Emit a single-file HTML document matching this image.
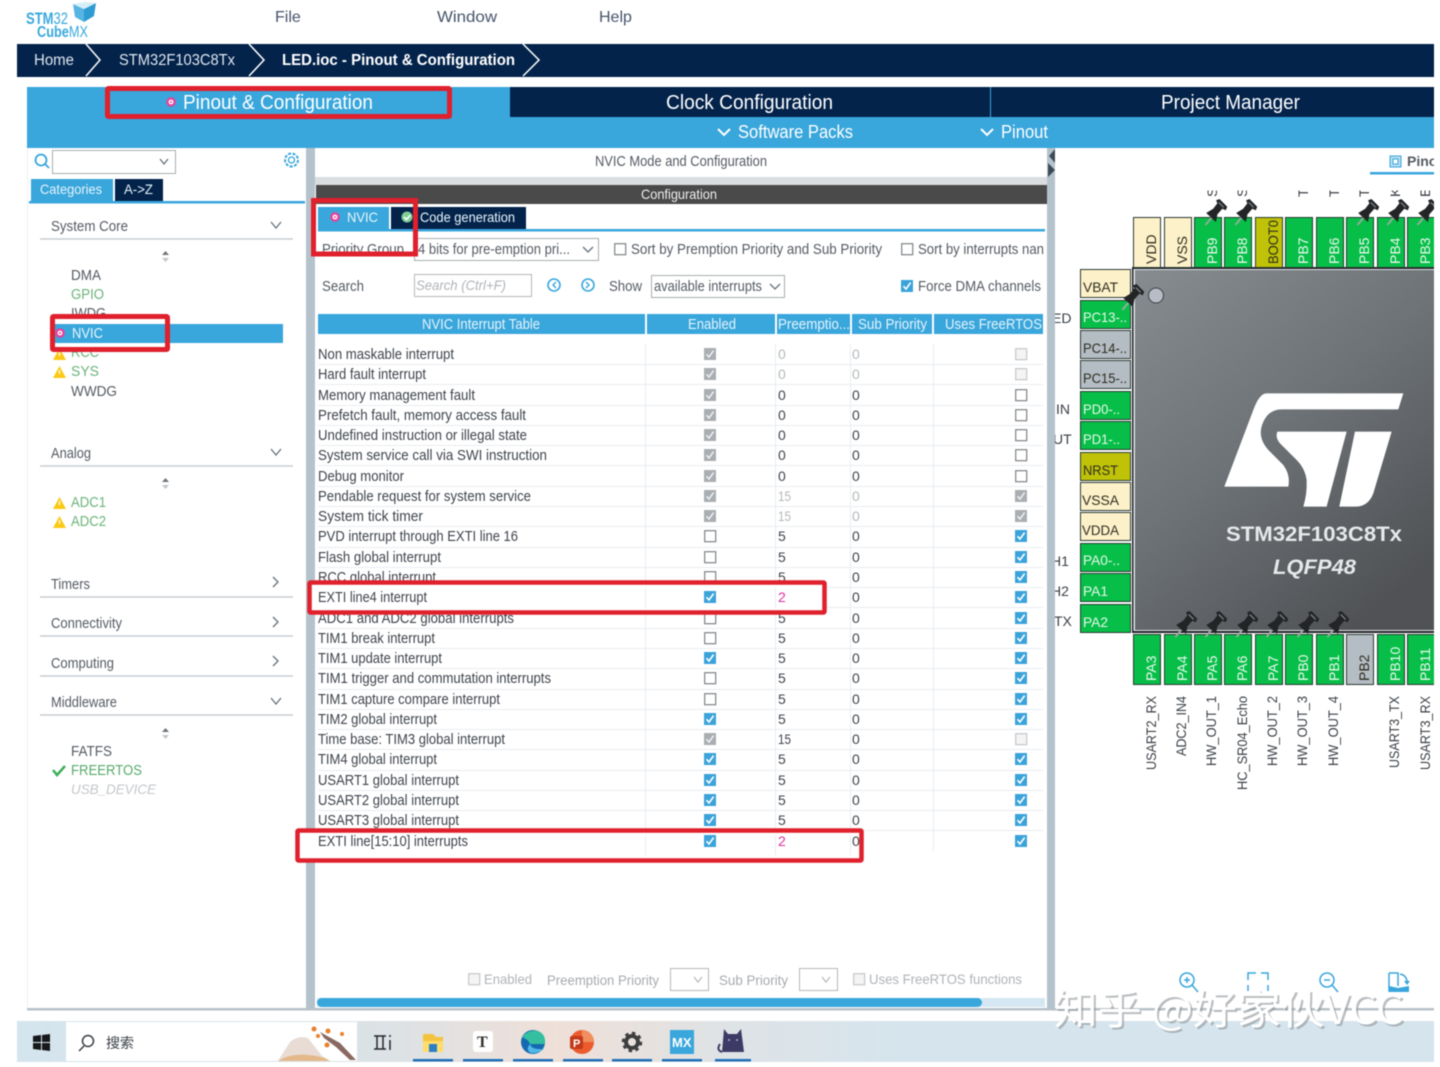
<!DOCTYPE html>
<html><head><meta charset="utf-8"><style>
html,body{margin:0;padding:0;background:#fff;width:1440px;height:1067px;overflow:hidden}
svg{display:block;filter:blur(.45px)}
text{font-family:"Liberation Sans","Noto Sans CJK SC",sans-serif}
.r{font-size:14.5px;fill:#3f444c}
.s{font-size:14.5px;fill:#555b63}
.n{font-size:14px;fill:#3f444c}
.dim{fill:#b4b8bb}
.w{fill:#fff}
.pw{font-size:14px;fill:#eaf7ee}
.pd{font-size:14px;fill:#2e2e20}
.lb{font-size:14px;fill:#3a3f45}
.ln{stroke:#c8ced2;stroke-width:1.5;fill:none}
.chev{fill:none;stroke:#66707a;stroke-width:1.3}
.rl{stroke:#e9ecee;stroke-width:1}
</style></head><body>
<svg width="1440" height="1067" viewBox="0 0 1440 1067" xmlns="http://www.w3.org/2000/svg">
<defs>
<linearGradient id="chip" x1="0" y1="0" x2="0.7" y2="1"><stop offset="0" stop-color="#868c90"/><stop offset="0.5" stop-color="#6e7377"/><stop offset="1" stop-color="#505255"/></linearGradient>
<linearGradient id="tb" x1="0" x2="1" y1="0" y2="0"><stop offset="0" stop-color="#d4e5ee"/><stop offset="0.26" stop-color="#dce2e6"/><stop offset="0.38" stop-color="#efe0d8"/><stop offset="0.5" stop-color="#dfe3e6"/><stop offset="0.62" stop-color="#d6e5ed"/><stop offset="1" stop-color="#d6e5ed"/></linearGradient>
<g id="cg"><rect x="0" y="0" width="12" height="12" fill="#a9aeb2"/><path d="M2.5 6.2 5 9 9.6 2.6" fill="none" stroke="#eef0f1" stroke-width="1.5"/></g>
<g id="ce"><rect x=".7" y=".7" width="11" height="11" fill="#fff" stroke="#7d8388" stroke-width="1.2"/></g>
<g id="cl"><rect x=".7" y=".7" width="11" height="11" fill="#f4f4f4" stroke="#c4c7ca" stroke-width="1.2"/></g>
<g id="cb"><rect x="0" y="0" width="12" height="12" fill="#3ba3da"/><path d="M2.5 6.2 5 9 9.6 2.6" fill="none" stroke="#fff" stroke-width="1.6"/></g>
<g id="pin"><g transform="scale(1.4)"><path d="M-7.500 8.500 -3 3" stroke="#a3a9a5" stroke-width="1.300"/><path d="M-7 0 -2 -3 1 -7 0 -9 2.500 -10 8 -4.500 7 -2 4.500 -3 1 1 0 6.500 Z" fill="#222426"/><path d="M2 -7.500 5.500 -4" stroke="#7d8387" stroke-width=".9"/></g></g>
<g id="warn"><path d="M0 6 6.500 -6 13 6Z" fill="#fbc913"/><path d="M6.500 -2V2" stroke="#fff" stroke-width="1.300"/></g>
<g id="err"><circle r="4.800" fill="#e6439b"/><circle r="2.400" fill="#fff"/><circle r="1" fill="#e6439b"/></g>
<clipPath id="cTop"><rect x="1190" y="190.500" width="250" height="7"/></clipPath>
<clipPath id="cPri"><rect x="316" y="240" width="95" height="15"/></clipPath>
<clipPath id="cR"><rect x="0" y="0" width="1434" height="1067"/></clipPath>
</defs>
<rect width="1440" height="1067" fill="#fff"/>

<!-- logo -->
<text x="26" y="24" font-size="17" font-weight="700" fill="#39a9dc" textLength="42" lengthAdjust="spacingAndGlyphs">STM<tspan font-weight="400">32</tspan></text>
<text x="37" y="37" font-size="16" font-weight="700" fill="#39a9dc" textLength="51" lengthAdjust="spacingAndGlyphs">Cube<tspan font-weight="400">MX</tspan></text>
<path d="M73 4 84 9V22L75 17Z" fill="#57b5e2"/><path d="M84 9 96 3 94 16 84 22Z" fill="#2f9bd3"/><path d="M73 4 85 2 96 3 84 9Z" fill="#d6eef8"/>
<text x="275" y="22" font-size="16" fill="#46546a">File</text>
<text x="437" y="22" font-size="16" fill="#46546a" textLength="60" lengthAdjust="spacingAndGlyphs">Window</text>
<text x="599" y="22" font-size="16" fill="#46546a">Help</text>

<!-- breadcrumb -->
<rect x="17" y="44" width="1417" height="33" fill="#03234b"/>
<path d="M86 44 100 60 86 76M249 44 264 60 249 76M523 44 539 60 523 76" fill="none" stroke="#fff" stroke-width="1.500"/>
<text x="34" y="65" font-size="15.500" fill="#dfe6ee" textLength="40" lengthAdjust="spacingAndGlyphs">Home</text>
<text x="119" y="65" font-size="15.500" fill="#dfe6ee" textLength="116" lengthAdjust="spacingAndGlyphs">STM32F103C8Tx</text>
<text x="282" y="65" font-size="15.500" font-weight="700" fill="#fff" textLength="233" lengthAdjust="spacingAndGlyphs">LED.ioc - Pinout &amp; Configuration</text>

<!-- tab band -->
<rect x="27" y="87" width="1407" height="61" fill="#39a6dc"/>
<rect x="510" y="87" width="480" height="30" fill="#03234b"/>
<rect x="991" y="87" width="443" height="30" fill="#03234b"/>
<use href="#err" x="171" y="102"/>
<text x="183" y="109" font-size="20" fill="#fff" textLength="190" lengthAdjust="spacingAndGlyphs">Pinout &amp; Configuration</text>
<text x="666" y="109" font-size="20" fill="#fff" textLength="167" lengthAdjust="spacingAndGlyphs">Clock Configuration</text>
<text x="1161" y="109" font-size="20" fill="#fff" textLength="139" lengthAdjust="spacingAndGlyphs">Project Manager</text>
<path d="M718 129 724 135 730 129M981 129 987 135 993 129" fill="none" stroke="#fff" stroke-width="2"/>
<text x="738" y="138" font-size="18" fill="#fff" textLength="115" lengthAdjust="spacingAndGlyphs">Software Packs</text>
<text x="1001" y="138" font-size="18" fill="#fff" textLength="47" lengthAdjust="spacingAndGlyphs">Pinout</text>
<rect x="107.500" y="88.500" width="342" height="28" rx="1" fill="none" stroke="#e0202c" stroke-width="5"/>

<!-- panels separators -->
<rect x="306" y="148" width="9" height="860" fill="#b4c2cc"/>
<rect x="1047" y="148" width="8" height="860" fill="#b4c2cc"/>
<rect x="27" y="1008" width="1407" height="2.500" fill="#b8c2c8"/>
<rect x="27" y="148" width="1" height="860" fill="#eef0f1"/>

<!-- left panel -->
<circle cx="41" cy="160" r="5.500" fill="none" stroke="#39a6dc" stroke-width="1.800"/><path d="M45 164 49 168" stroke="#39a6dc" stroke-width="1.800"/>
<rect x="52.500" y="150.500" width="123" height="23" fill="#fff" stroke="#a8acb0"/>
<path d="M160 159 164 164 168 159" class="chev"/>
<circle cx="291.500" cy="160" r="6.500" fill="none" stroke="#39a6dc" stroke-width="2" stroke-dasharray="3 1.500"/><circle cx="291.500" cy="160" r="3" fill="none" stroke="#39a6dc" stroke-width="1.300"/>
<rect x="31" y="179" width="82" height="22" fill="#39a6dc"/>
<rect x="115" y="179" width="48" height="22" fill="#03234b"/>
<rect x="29" y="201" width="276" height="2.500" fill="#39a6dc"/>
<text x="40" y="194" font-size="14" fill="#e6f4fb" textLength="62" lengthAdjust="spacingAndGlyphs">Categories</text>
<text x="124" y="194" font-size="14" fill="#e6f4fb" textLength="29" lengthAdjust="spacingAndGlyphs">A-&gt;Z</text>

<text x="51" y="231" class="s" textLength="77" lengthAdjust="spacingAndGlyphs">System Core</text>
<path d="M271 222 276 228 281 222" class="chev"/>
<line x1="40" y1="239" x2="293" y2="239" class="ln"/>
<path d="M162 255 165.500 251 169 255Z" fill="#6f757b"/><path d="M162 258 165.500 262 169 258Z" fill="#c2c6c9"/>
<text x="71" y="280" class="s" textLength="30" lengthAdjust="spacingAndGlyphs">DMA</text>
<text x="71" y="299" class="s" style="fill:#6cb47a" textLength="33" lengthAdjust="spacingAndGlyphs">GPIO</text>
<text x="71" y="318" class="s" textLength="35" lengthAdjust="spacingAndGlyphs">IWDG</text>
<text x="71" y="357" class="s" style="fill:#6cb47a" textLength="28" lengthAdjust="spacingAndGlyphs">RCC</text>
<use href="#warn" x="53" y="354"/>
<rect x="51" y="315" width="118" height="36" fill="#fff"/>
<rect x="55" y="324" width="228" height="19" fill="#39a6dc"/>
<rect x="52.500" y="316.500" width="115" height="33" rx="1" fill="none" stroke="#e0202c" stroke-width="5"/>
<use href="#err" x="60" y="333"/>
<text x="72" y="338" font-size="14.500" fill="#e9f6fc" textLength="31" lengthAdjust="spacingAndGlyphs">NVIC</text>
<use href="#warn" x="53" y="372"/>
<text x="71" y="376" class="s" style="fill:#6cb47a" textLength="28" lengthAdjust="spacingAndGlyphs">SYS</text>
<text x="71" y="396" class="s" textLength="46" lengthAdjust="spacingAndGlyphs">WWDG</text>

<text x="51" y="458" class="s" textLength="40" lengthAdjust="spacingAndGlyphs">Analog</text>
<path d="M271 449 276 455 281 449" class="chev"/>
<line x1="40" y1="466" x2="293" y2="466" class="ln"/>
<path d="M162 482 165.500 478 169 482Z" fill="#6f757b"/><path d="M162 485 165.500 489 169 485Z" fill="#c2c6c9"/>
<use href="#warn" x="53" y="503"/>
<text x="71" y="507" class="s" style="fill:#6cb47a" textLength="35" lengthAdjust="spacingAndGlyphs">ADC1</text>
<use href="#warn" x="53" y="522"/>
<text x="71" y="526" class="s" style="fill:#6cb47a" textLength="35" lengthAdjust="spacingAndGlyphs">ADC2</text>

<text x="51" y="589" class="s" textLength="39" lengthAdjust="spacingAndGlyphs">Timers</text>
<path d="M273 577 278 582 273 587" class="chev"/>
<line x1="40" y1="597" x2="293" y2="597" class="ln"/>
<text x="51" y="628" class="s" textLength="71" lengthAdjust="spacingAndGlyphs">Connectivity</text>
<path d="M273 617 278 622 273 627" class="chev"/>
<line x1="40" y1="636" x2="293" y2="636" class="ln"/>
<text x="51" y="668" class="s" textLength="63" lengthAdjust="spacingAndGlyphs">Computing</text>
<path d="M273 656 278 661 273 666" class="chev"/>
<line x1="40" y1="676" x2="293" y2="676" class="ln"/>
<text x="51" y="707" class="s" textLength="66" lengthAdjust="spacingAndGlyphs">Middleware</text>
<path d="M271 698 276 704 281 698" class="chev"/>
<line x1="40" y1="715" x2="293" y2="715" class="ln"/>
<path d="M162 732 165.500 728 169 732Z" fill="#6f757b"/><path d="M162 735 165.500 739 169 735Z" fill="#c2c6c9"/>
<text x="71" y="756" class="s" textLength="41" lengthAdjust="spacingAndGlyphs">FATFS</text>
<path d="M53 770 57 775 65 766" fill="none" stroke="#3fae5a" stroke-width="2.500"/>
<text x="71" y="775" class="s" style="fill:#59ab6b" textLength="71" lengthAdjust="spacingAndGlyphs">FREERTOS</text>
<text x="71" y="794" font-size="14" font-style="italic" fill="#c3c7ca" textLength="85" lengthAdjust="spacingAndGlyphs">USB_DEVICE</text>

<!-- middle top -->
<text x="595" y="166" class="s" textLength="172" lengthAdjust="spacingAndGlyphs">NVIC Mode and Configuration</text>
<rect x="315" y="177" width="732" height="8" fill="#d9dde0"/>
<rect x="316" y="185" width="731" height="19" fill="#4a4a4a"/>
<text x="641" y="199" font-size="14" fill="#f0f0f0" textLength="76" lengthAdjust="spacingAndGlyphs">Configuration</text>
<rect x="318" y="207" width="71" height="22" fill="#39a6dc"/>
<rect x="391" y="207" width="135" height="22" fill="#03234b"/>
<rect x="318" y="229" width="727" height="2.500" fill="#39a6dc"/>
<use href="#err" x="335" y="217"/>
<text x="347" y="222" font-size="14" fill="#e9f6fc" textLength="31" lengthAdjust="spacingAndGlyphs">NVIC</text>
<circle cx="407" cy="217" r="5.500" fill="#7fce96"/><path d="M404 217 406.500 219.500 410.500 215" fill="none" stroke="#fff" stroke-width="1.600"/>
<text x="420" y="222" font-size="14" fill="#e9f6fc" textLength="95" lengthAdjust="spacingAndGlyphs">Code generation</text>
<text x="322" y="254" class="s" clip-path="url(#cPri)" textLength="82" lengthAdjust="spacingAndGlyphs">Priority Group</text>
<rect x="414.500" y="238.500" width="184" height="22" fill="#fff" stroke="#a8acb0"/>
<text x="418" y="254" class="s" textLength="152" lengthAdjust="spacingAndGlyphs">4 bits for pre-emption pri...</text>
<path d="M583 247 588 252 593 247" class="chev"/>
<path d="M313.500 200.500H415.500V254H313.500Z" fill="none" stroke="#e0202c" stroke-width="5"/>
<use href="#ce" x="614" y="243"/>
<text x="631" y="254" class="s" textLength="251" lengthAdjust="spacingAndGlyphs">Sort by Premption Priority and Sub Priority</text>
<use href="#ce" x="901" y="243"/>
<text x="918" y="254" class="s" textLength="126" lengthAdjust="spacingAndGlyphs">Sort by interrupts nan</text>
<text x="322" y="291" class="s" textLength="42" lengthAdjust="spacingAndGlyphs">Search</text>
<rect x="414.500" y="274.500" width="117" height="22" fill="#fff" stroke="#b4b8bb"/>
<text x="416" y="290" font-size="14" font-style="italic" fill="#b0b4b8" textLength="90" lengthAdjust="spacingAndGlyphs">Search (Ctrl+F)</text>
<circle cx="554" cy="285" r="6" fill="none" stroke="#39a6dc" stroke-width="1.600"/><path d="M556 282 553 285 556 288" fill="none" stroke="#39a6dc" stroke-width="1.400"/>
<circle cx="588" cy="285" r="6" fill="none" stroke="#39a6dc" stroke-width="1.600"/><path d="M586 282 589 285 586 288" fill="none" stroke="#39a6dc" stroke-width="1.400"/>
<text x="609" y="291" class="s" textLength="33" lengthAdjust="spacingAndGlyphs">Show</text>
<rect x="651.500" y="275.500" width="133" height="22" fill="#fff" stroke="#a8acb0"/>
<text x="654" y="291" class="s" textLength="108" lengthAdjust="spacingAndGlyphs">available interrupts</text>
<path d="M770 284 775 289 780 284" class="chev"/>
<use href="#cb" x="901" y="280"/>
<text x="918" y="291" class="s" textLength="123" lengthAdjust="spacingAndGlyphs">Force DMA channels</text>

<!-- table header -->
<g fill="#39a6dc"><rect x="318" y="314" width="327" height="20"/><rect x="647" y="314" width="128" height="20"/><rect x="777" y="314" width="73" height="20"/><rect x="852" y="314" width="80" height="20"/><rect x="934" y="314" width="109" height="20"/></g>
<g font-size="14.500" fill="#e6f4fb">
<text x="422" y="329" textLength="118" lengthAdjust="spacingAndGlyphs">NVIC Interrupt Table</text>
<text x="688" y="329" textLength="48" lengthAdjust="spacingAndGlyphs">Enabled</text>
<text x="778" y="329" textLength="72" lengthAdjust="spacingAndGlyphs">Preemptio...</text>
<text x="858" y="329" textLength="69" lengthAdjust="spacingAndGlyphs">Sub Priority</text>
<text x="945" y="329" textLength="97" lengthAdjust="spacingAndGlyphs">Uses FreeRTOS</text>
</g>
<!-- row lines -->
<g class="rl">
<line x1="318" x2="1043" y1="364.500" y2="364.500"/><line x1="318" x2="1043" y1="384.500" y2="384.500"/><line x1="318" x2="1043" y1="405.500" y2="405.500"/><line x1="318" x2="1043" y1="425.500" y2="425.500"/><line x1="318" x2="1043" y1="445.500" y2="445.500"/><line x1="318" x2="1043" y1="465.500" y2="465.500"/><line x1="318" x2="1043" y1="486.500" y2="486.500"/><line x1="318" x2="1043" y1="506.500" y2="506.500"/><line x1="318" x2="1043" y1="526.500" y2="526.500"/><line x1="318" x2="1043" y1="547.500" y2="547.500"/><line x1="318" x2="1043" y1="567.500" y2="567.500"/><line x1="318" x2="1043" y1="587.500" y2="587.500"/><line x1="318" x2="1043" y1="607.500" y2="607.500"/><line x1="318" x2="1043" y1="628.500" y2="628.500"/><line x1="318" x2="1043" y1="648.500" y2="648.500"/><line x1="318" x2="1043" y1="668.500" y2="668.500"/><line x1="318" x2="1043" y1="689.500" y2="689.500"/><line x1="318" x2="1043" y1="709.500" y2="709.500"/><line x1="318" x2="1043" y1="729.500" y2="729.500"/><line x1="318" x2="1043" y1="749.500" y2="749.500"/><line x1="318" x2="1043" y1="770.500" y2="770.500"/><line x1="318" x2="1043" y1="790.500" y2="790.500"/><line x1="318" x2="1043" y1="810.500" y2="810.500"/><line x1="318" x2="1043" y1="830.500" y2="830.500"/>
<line x1="645.500" x2="645.500" y1="344" y2="851"/><line x1="775.500" x2="775.500" y1="344" y2="851"/><line x1="850.500" x2="850.500" y1="344" y2="851"/><line x1="933.500" x2="933.500" y1="344" y2="851"/>
</g>
<!-- rows -->
<g class="r">
<text x="318" y="359" textLength="136" lengthAdjust="spacingAndGlyphs">Non maskable interrupt</text>
<text x="318" y="379" textLength="108" lengthAdjust="spacingAndGlyphs">Hard fault interrupt</text>
<text x="318" y="400" textLength="157" lengthAdjust="spacingAndGlyphs">Memory management fault</text>
<text x="318" y="420" textLength="208" lengthAdjust="spacingAndGlyphs">Prefetch fault, memory access fault</text>
<text x="318" y="440" textLength="209" lengthAdjust="spacingAndGlyphs">Undefined instruction or illegal state</text>
<text x="318" y="460" textLength="229" lengthAdjust="spacingAndGlyphs">System service call via SWI instruction</text>
<text x="318" y="481" textLength="86" lengthAdjust="spacingAndGlyphs">Debug monitor</text>
<text x="318" y="501" textLength="213" lengthAdjust="spacingAndGlyphs">Pendable request for system service</text>
<text x="318" y="521" textLength="105" lengthAdjust="spacingAndGlyphs">System tick timer</text>
<text x="318" y="541" textLength="200" lengthAdjust="spacingAndGlyphs">PVD interrupt through EXTI line 16</text>
<text x="318" y="562" textLength="123" lengthAdjust="spacingAndGlyphs">Flash global interrupt</text>
<text x="318" y="582" textLength="118" lengthAdjust="spacingAndGlyphs">RCC global interrupt</text>
<text x="318" y="623" textLength="196" lengthAdjust="spacingAndGlyphs">ADC1 and ADC2 global interrupts</text>
<text x="318" y="643" textLength="117" lengthAdjust="spacingAndGlyphs">TIM1 break interrupt</text>
<text x="318" y="663" textLength="124" lengthAdjust="spacingAndGlyphs">TIM1 update interrupt</text>
<text x="318" y="683" textLength="233" lengthAdjust="spacingAndGlyphs">TIM1 trigger and commutation interrupts</text>
<text x="318" y="704" textLength="182" lengthAdjust="spacingAndGlyphs">TIM1 capture compare interrupt</text>
<text x="318" y="724" textLength="119" lengthAdjust="spacingAndGlyphs">TIM2 global interrupt</text>
<text x="318" y="744" textLength="187" lengthAdjust="spacingAndGlyphs">Time base: TIM3 global interrupt</text>
<text x="318" y="764" textLength="119" lengthAdjust="spacingAndGlyphs">TIM4 global interrupt</text>
<text x="318" y="785" textLength="141" lengthAdjust="spacingAndGlyphs">USART1 global interrupt</text>
<text x="318" y="805" textLength="141" lengthAdjust="spacingAndGlyphs">USART2 global interrupt</text>
<text x="318" y="825" textLength="141" lengthAdjust="spacingAndGlyphs">USART3 global interrupt</text>
</g>
<!-- preempt / sub -->
<g class="n">
<text x="778" y="359" class="n dim">0</text><text x="778" y="379" class="n dim">0</text><text x="778" y="400">0</text><text x="778" y="420">0</text><text x="778" y="440">0</text><text x="778" y="460">0</text><text x="778" y="481">0</text><text x="778" y="501" class="n dim" textLength="13" lengthAdjust="spacingAndGlyphs">15</text><text x="778" y="521" class="n dim" textLength="13" lengthAdjust="spacingAndGlyphs">15</text><text x="778" y="541">5</text><text x="778" y="562">5</text><text x="778" y="582">5</text><text x="778" y="623">5</text><text x="778" y="643">5</text><text x="778" y="663">5</text><text x="778" y="683">5</text><text x="778" y="704">5</text><text x="778" y="724">5</text><text x="778" y="744" textLength="13" lengthAdjust="spacingAndGlyphs">15</text><text x="778" y="764">5</text><text x="778" y="785">5</text><text x="778" y="805">5</text><text x="778" y="825">5</text>
<text x="852" y="359" class="n dim">0</text><text x="852" y="379" class="n dim">0</text><text x="852" y="400">0</text><text x="852" y="420">0</text><text x="852" y="440">0</text><text x="852" y="460">0</text><text x="852" y="481">0</text><text x="852" y="501" class="n dim">0</text><text x="852" y="521" class="n dim">0</text><text x="852" y="541">0</text><text x="852" y="562">0</text><text x="852" y="582">0</text><text x="852" y="602">0</text><text x="852" y="623">0</text><text x="852" y="643">0</text><text x="852" y="663">0</text><text x="852" y="683">0</text><text x="852" y="704">0</text><text x="852" y="724">0</text><text x="852" y="744">0</text><text x="852" y="764">0</text><text x="852" y="785">0</text><text x="852" y="805">0</text><text x="852" y="825">0</text>
</g>
<!-- enabled checks -->
<use href="#cg" x="704" y="348"/><use href="#cg" x="704" y="368"/><use href="#cg" x="704" y="389"/><use href="#cg" x="704" y="409"/><use href="#cg" x="704" y="429"/><use href="#cg" x="704" y="449"/><use href="#cg" x="704" y="470"/><use href="#cg" x="704" y="490"/><use href="#cg" x="704" y="510"/>
<use href="#ce" x="704" y="530"/><use href="#ce" x="704" y="551"/><use href="#ce" x="704" y="571"/><use href="#ce" x="704" y="612"/><use href="#ce" x="704" y="632"/><use href="#cb" x="704" y="652"/><use href="#ce" x="704" y="672"/><use href="#ce" x="704" y="693"/><use href="#cb" x="704" y="713"/><use href="#cg" x="704" y="733"/><use href="#cb" x="704" y="753"/><use href="#cb" x="704" y="774"/><use href="#cb" x="704" y="794"/><use href="#cb" x="704" y="814"/>
<!-- freertos checks -->
<use href="#cl" x="1015" y="348"/><use href="#cl" x="1015" y="368"/><use href="#ce" x="1015" y="389"/><use href="#ce" x="1015" y="409"/><use href="#ce" x="1015" y="429"/><use href="#ce" x="1015" y="449"/><use href="#ce" x="1015" y="470"/><use href="#cg" x="1015" y="490"/><use href="#cg" x="1015" y="510"/>
<use href="#cb" x="1015" y="530"/><use href="#cb" x="1015" y="551"/><use href="#cb" x="1015" y="571"/><use href="#cb" x="1015" y="591"/><use href="#cb" x="1015" y="612"/><use href="#cb" x="1015" y="632"/><use href="#cb" x="1015" y="652"/><use href="#cb" x="1015" y="672"/><use href="#cb" x="1015" y="693"/><use href="#cb" x="1015" y="713"/><use href="#cl" x="1015" y="733"/><use href="#cb" x="1015" y="753"/><use href="#cb" x="1015" y="774"/><use href="#cb" x="1015" y="794"/><use href="#cb" x="1015" y="814"/><use href="#cb" x="1015" y="835"/>

<!-- red box 1 -->
<rect x="309.500" y="582.500" width="515" height="30" rx="1" fill="#fff" stroke="#e0202c" stroke-width="4.500"/>
<line x1="645.500" x2="645.500" y1="587" y2="608" stroke="#e9ecee"/><line x1="775.500" x2="775.500" y1="587" y2="608" stroke="#e9ecee"/>
<text x="318" y="602" class="r" textLength="109" lengthAdjust="spacingAndGlyphs">EXTI line4 interrupt</text>
<use href="#cb" x="704" y="591"/>
<text x="778" y="602" font-size="14" fill="#df2f9e">2</text>
<!-- red box 2 -->
<rect x="297.500" y="830.500" width="564" height="30" rx="1" fill="#fff" stroke="#e0202c" stroke-width="4.500"/>
<line x1="645.500" x2="645.500" y1="835" y2="855" stroke="#e9ecee"/><line x1="775.500" x2="775.500" y1="835" y2="855" stroke="#e9ecee"/><line x1="850.500" x2="850.500" y1="835" y2="855" stroke="#e9ecee"/>
<text x="318" y="846" class="r" textLength="150" lengthAdjust="spacingAndGlyphs">EXTI line[15:10] interrupts</text>
<use href="#cb" x="704" y="835"/>
<text x="778" y="846" font-size="14" fill="#df2f9e">2</text>
<text x="852" y="846" class="n">0</text>

<!-- bottom controls -->
<use href="#cl" x="468" y="973"/>
<text x="484" y="984" font-size="14" fill="#b0b4b8" textLength="48" lengthAdjust="spacingAndGlyphs">Enabled</text>
<text x="547" y="985" font-size="14" fill="#a6abaf" textLength="112" lengthAdjust="spacingAndGlyphs">Preemption Priority</text>
<rect x="670.500" y="968.500" width="38" height="22" fill="#fff" stroke="#b4b8bb"/><path d="M694 977 698 982 702 977" fill="none" stroke="#b4b8bb" stroke-width="1.200"/>
<text x="719" y="985" font-size="14" fill="#a6abaf" textLength="69" lengthAdjust="spacingAndGlyphs">Sub Priority</text>
<rect x="799.500" y="968.500" width="38" height="22" fill="#fff" stroke="#b4b8bb"/><path d="M822 977 826 982 830 977" fill="none" stroke="#b4b8bb" stroke-width="1.200"/>
<use href="#cl" x="853" y="973"/>
<text x="869" y="984" font-size="14" fill="#b0b4b8" textLength="153" lengthAdjust="spacingAndGlyphs">Uses FreeRTOS functions</text>
<rect x="317" y="998" width="728" height="9" fill="#d6e7f4"/>
<rect x="317" y="998" width="665" height="9" rx="4.500" fill="#39a6dc"/>

<!-- pinout top right -->
<rect x="1390" y="156" width="11" height="11" fill="#b8def0" stroke="#39a6dc"/><rect x="1393" y="159" width="5" height="5" fill="#fff" stroke="#39a6dc"/>
<text x="1407" y="166" font-size="14" font-weight="700" fill="#555b63" clip-path="url(#cR)">Pinout</text>
<rect x="1370" y="172" width="64" height="2.500" fill="#39a6dc"/>

<!-- chip -->
<g clip-path="url(#cR)">
<rect x="1132" y="267" width="310" height="366" fill="#1f2326"/>
<rect x="1133.500" y="269" width="310" height="362" fill="#e3e6e8"/>
<rect x="1135" y="270" width="310" height="360" fill="url(#chip)"/>
<g stroke="#2a3a32" stroke-width="1">
<g fill="#fdf1c9"><rect x="1133.500" y="217.500" width="27" height="50"/><rect x="1164.500" y="217.500" width="27" height="50"/></g>
<g fill="#07bf48"><rect x="1194.500" y="217.500" width="27" height="50"/><rect x="1224.500" y="217.500" width="27" height="50"/><rect x="1285.500" y="217.500" width="27" height="50"/><rect x="1316.500" y="217.500" width="27" height="50"/><rect x="1346.500" y="217.500" width="27" height="50"/><rect x="1377.500" y="217.500" width="27" height="50"/><rect x="1407.500" y="217.500" width="27" height="50"/></g>
<rect x="1255.500" y="217.500" width="27" height="50" fill="#bfc207"/>
<g fill="#07bf48"><rect x="1133.500" y="634.500" width="27" height="50"/><rect x="1164.500" y="634.500" width="27" height="50"/><rect x="1194.500" y="634.500" width="27" height="50"/><rect x="1224.500" y="634.500" width="27" height="50"/><rect x="1255.500" y="634.500" width="27" height="50"/><rect x="1285.500" y="634.500" width="27" height="50"/><rect x="1316.500" y="634.500" width="27" height="50"/><rect x="1377.500" y="634.500" width="27" height="50"/><rect x="1407.500" y="634.500" width="27" height="50"/></g>
<rect x="1346.500" y="634.500" width="27" height="50" fill="#b4bcc4"/>
<g>
<rect x="1080.500" y="269.500" width="50" height="28" fill="#fdf1c9"/>
<rect x="1080.500" y="300.500" width="50" height="28" fill="#07bf48"/>
<rect x="1080.500" y="330.500" width="50" height="28" fill="#b4bcc4"/>
<rect x="1080.500" y="360.500" width="50" height="28" fill="#b4bcc4"/>
<rect x="1080.500" y="391.500" width="50" height="28" fill="#07bf48"/>
<rect x="1080.500" y="421.500" width="50" height="28" fill="#07bf48"/>
<rect x="1080.500" y="452.500" width="50" height="28" fill="#bfc207"/>
<rect x="1080.500" y="482.500" width="50" height="28" fill="#fdf1c9"/>
<rect x="1080.500" y="512.500" width="50" height="28" fill="#fdf1c9"/>
<rect x="1080.500" y="543.500" width="50" height="28" fill="#07bf48"/>
<rect x="1080.500" y="573.500" width="50" height="28" fill="#07bf48"/>
<rect x="1080.500" y="604.500" width="50" height="28" fill="#07bf48"/>
</g>
</g>
<!-- left pin labels -->
<text x="1083" y="292" class="pd" textLength="35" lengthAdjust="spacingAndGlyphs">VBAT</text>
<text x="1083" y="322" class="pw" textLength="44" lengthAdjust="spacingAndGlyphs">PC13-..</text>
<text x="1083" y="353" class="pd" textLength="44" lengthAdjust="spacingAndGlyphs">PC14-..</text>
<text x="1083" y="383" class="pd" textLength="44" lengthAdjust="spacingAndGlyphs">PC15-..</text>
<text x="1083" y="414" class="pw" textLength="37" lengthAdjust="spacingAndGlyphs">PD0-..</text>
<text x="1083" y="444" class="pw" textLength="37" lengthAdjust="spacingAndGlyphs">PD1-..</text>
<text x="1083" y="475" class="pd" textLength="35" lengthAdjust="spacingAndGlyphs">NRST</text>
<text x="1082" y="505" class="pd" textLength="37" lengthAdjust="spacingAndGlyphs">VSSA</text>
<text x="1082" y="535" class="pd" textLength="37" lengthAdjust="spacingAndGlyphs">VDDA</text>
<text x="1083" y="565" class="pw" textLength="37" lengthAdjust="spacingAndGlyphs">PA0-..</text>
<text x="1083" y="596" class="pw" textLength="25" lengthAdjust="spacingAndGlyphs">PA1</text>
<text x="1083" y="627" class="pw" textLength="25" lengthAdjust="spacingAndGlyphs">PA2</text>
<!-- clipped left labels -->
<text x="1052" y="323" font-size="14" fill="#3a3f45">ED</text>
<text x="1056" y="414" font-size="14" fill="#3a3f45">IN</text>
<text x="1053" y="444" font-size="14" fill="#3a3f45">UT</text>
<text x="1051" y="566" font-size="14" fill="#3a3f45">H1</text>
<text x="1051" y="596" font-size="14" fill="#3a3f45">H2</text>
<text x="1054" y="626" font-size="14" fill="#3a3f45">TX</text>
<rect x="1047" y="300" width="8" height="340" fill="#b4c2cc"/>
<path d="M1055 149 1049 156 1055 163ZM1048 163 1055 170 1048 177Z" fill="#3d4a55"/>
<!-- top rotated pin labels -->
<text transform="translate(1156,264) rotate(-90)" class="pd">VDD</text>
<text transform="translate(1187,264) rotate(-90)" class="pd">VSS</text>
<text transform="translate(1217,264) rotate(-90)" class="pw">PB9</text>
<text transform="translate(1247,264) rotate(-90)" class="pw">PB8</text>
<text transform="translate(1278,264) rotate(-90)" class="pd" textLength="44" lengthAdjust="spacingAndGlyphs">BOOT0</text>
<text transform="translate(1308,264) rotate(-90)" class="pw">PB7</text>
<text transform="translate(1339,264) rotate(-90)" class="pw">PB6</text>
<text transform="translate(1369,264) rotate(-90)" class="pw">PB5</text>
<text transform="translate(1400,264) rotate(-90)" class="pw">PB4</text>
<text transform="translate(1430,264) rotate(-90)" class="pw">PB3</text>
<!-- top clipped labels -->
<g clip-path="url(#cTop)">
<text transform="translate(1217,197) rotate(-90)" class="lb">S</text>
<text transform="translate(1247,197) rotate(-90)" class="lb">S</text>
<text transform="translate(1308,197) rotate(-90)" class="lb">T</text>
<text transform="translate(1339,197) rotate(-90)" class="lb">T</text>
<text transform="translate(1369,197) rotate(-90)" class="lb">T</text>
<text transform="translate(1400,197) rotate(-90)" class="lb">K</text>
<text transform="translate(1430,197) rotate(-90)" class="lb">E</text>
</g>
<!-- bottom rotated pin labels -->
<text transform="translate(1156,681) rotate(-90)" class="pw">PA3</text>
<text transform="translate(1187,681) rotate(-90)" class="pw">PA4</text>
<text transform="translate(1217,681) rotate(-90)" class="pw">PA5</text>
<text transform="translate(1247,681) rotate(-90)" class="pw">PA6</text>
<text transform="translate(1278,681) rotate(-90)" class="pw">PA7</text>
<text transform="translate(1308,681) rotate(-90)" class="pw">PB0</text>
<text transform="translate(1339,681) rotate(-90)" class="pw">PB1</text>
<text transform="translate(1369,681) rotate(-90)" class="pd">PB2</text>
<text transform="translate(1400,681) rotate(-90)" class="pw">PB10</text>
<text transform="translate(1430,681) rotate(-90)" class="pw">PB11</text>
<!-- signal labels -->
<text transform="translate(1156,770) rotate(-90)" class="lb" textLength="74" lengthAdjust="spacingAndGlyphs">USART2_RX</text>
<text transform="translate(1186,756) rotate(-90)" class="lb" textLength="60" lengthAdjust="spacingAndGlyphs">ADC2_IN4</text>
<text transform="translate(1216,766) rotate(-90)" class="lb" textLength="70" lengthAdjust="spacingAndGlyphs">HW_OUT_1</text>
<text transform="translate(1247,790) rotate(-90)" class="lb" textLength="94" lengthAdjust="spacingAndGlyphs">HC_SR04_Echo</text>
<text transform="translate(1277,766) rotate(-90)" class="lb" textLength="70" lengthAdjust="spacingAndGlyphs">HW_OUT_2</text>
<text transform="translate(1307,766) rotate(-90)" class="lb" textLength="70" lengthAdjust="spacingAndGlyphs">HW_OUT_3</text>
<text transform="translate(1338,766) rotate(-90)" class="lb" textLength="70" lengthAdjust="spacingAndGlyphs">HW_OUT_4</text>
<text transform="translate(1399,768) rotate(-90)" class="lb" textLength="72" lengthAdjust="spacingAndGlyphs">USART3_TX</text>
<text transform="translate(1430,770) rotate(-90)" class="lb" textLength="74" lengthAdjust="spacingAndGlyphs">USART3_RX</text>
<!-- chip contents -->
<circle cx="1156" cy="295.500" r="7.500" fill="#b7bdc5" stroke="#3c4045" stroke-width="1"/>
<g transform="translate(1040,380) scale(.3333)" fill="#fff">
<path d="M680 40H1090L1075 88H725Q685 88 668 130Q650 175 690 215L730 255Q752 285 745 320H553L640 90Q658 40 680 40Z"/>
<path d="M712 155H920L860 380H790Q802 340 800 300Q795 265 770 240L720 190Q705 172 712 155Z"/>
<path d="M945 155H1055L1000 340Q985 380 945 380H898Z"/>
</g>
<text x="1226" y="541" font-size="21" font-weight="700" fill="#e6e8e9" textLength="176" lengthAdjust="spacingAndGlyphs">STM32F103C8Tx</text>
<text x="1273" y="574" font-size="21" font-weight="700" font-style="italic" fill="#e6e8e9" textLength="83" lengthAdjust="spacingAndGlyphs">LQFP48</text>
<g clip-path="url(#cR)">
<use href="#pin" x="1216" y="213"/><use href="#pin" x="1246" y="213"/><use href="#pin" x="1368" y="213"/><use href="#pin" x="1398" y="213"/><use href="#pin" x="1428" y="213"/>
<use href="#pin" x="1133" y="298"/>
<use href="#pin" x="1186" y="625"/><use href="#pin" x="1216" y="625"/><use href="#pin" x="1247" y="625"/><use href="#pin" x="1277" y="625"/><use href="#pin" x="1308" y="625"/><use href="#pin" x="1338" y="625"/>
</g>

<!-- zoom icons -->
<circle cx="1187" cy="980" r="7" fill="none" stroke="#39a6dc" stroke-width="1.500"/><path d="M1184 980H1190M1187 977V983" stroke="#39a6dc" stroke-width="1.500"/><path d="M1192 985 1198 992" stroke="#39a6dc" stroke-width="1.500"/>
<path d="M1248 980V973H1256M1261 973H1268V980M1248 985V991M1268 985V991" fill="none" stroke="#39a6dc" stroke-width="1.500"/>
<circle cx="1327" cy="980" r="7" fill="none" stroke="#39a6dc" stroke-width="1.500"/><path d="M1324 980H1330" stroke="#39a6dc" stroke-width="1.500"/><path d="M1332 985 1338 992" stroke="#39a6dc" stroke-width="1.500"/>
<path d="M1389 973H1398V986" fill="none" stroke="#39a6dc" stroke-width="1.500"/><path d="M1389 973V992" stroke="#39a6dc" stroke-width="1.500"/><path d="M1400 974Q1406 975 1407 981" fill="none" stroke="#39a6dc" stroke-width="1.500"/><path d="M1404 981H1410L1407 985Z" fill="#39a6dc"/><path d="M1389 986 1398 988 1409 986V992H1389Z" fill="#39a6dc"/>

<!-- taskbar -->
<rect x="17" y="1021" width="1417" height="41" fill="url(#tb)"/>
<rect x="66" y="1022" width="291" height="39" fill="#fff"/>
<g fill="#16181a"><path d="M33 1036 41 1035V1042H33ZM42 1035 50 1034V1042H42ZM33 1043H41V1050L33 1049ZM42 1043H50V1051L42 1050Z"/></g>
<circle cx="88" cy="1041" r="5.500" fill="none" stroke="#3a3f45" stroke-width="1.500"/><path d="M84 1046 79 1051" stroke="#3a3f45" stroke-width="1.500"/>
<text x="106" y="1048" font-size="14" fill="#3a3f45">搜索</text>
<path d="M278 1061 290 1042 Q298 1035 308 1038 L322 1056 330 1061Z" fill="#e8dcd4"/>
<path d="M278 1061Q295 1050 325 1058L330 1061Z" fill="#e4b98a"/>
<path d="M320 1032 340 1043 356 1060H350L336 1047 324 1038Z" fill="#8a6a60"/>
<g fill="#e8812a"><circle cx="314" cy="1029" r="2.500"/><circle cx="328" cy="1031" r="2.500"/><circle cx="318" cy="1036" r="2"/><circle cx="342" cy="1034" r="2"/><circle cx="327" cy="1045" r="2.500"/></g>
<path d="M374 1036H386M374 1049H386M377 1036V1049M383 1036V1049M390 1035V1037M390 1040V1050" stroke="#24282c" stroke-width="1.500" fill="none"/>
<path d="M423 1034H433L436 1037H443V1052H423Z" fill="#f4c33d"/><path d="M423 1041H443V1052H423Z" fill="#ffdc6c"/><rect x="429" y="1044" width="8" height="8" fill="#2b7fc4"/>
<rect x="473" y="1031" width="20" height="21" rx="3" fill="#fff"/><text x="477" y="1047" font-size="16" font-weight="700" fill="#333" style="font-family:'Liberation Serif',serif">T</text>
<circle cx="533" cy="1042" r="12" fill="#1469b0"/><path d="M522 1037Q528 1029 538 1031Q546 1034 545 1044H530Q529 1040 522 1037Z" fill="#35bfa0"/><path d="M530 1044Q531 1050 544 1049Q538 1054 531 1053Q525 1050 530 1044Z" fill="#4fb8e8"/>
<circle cx="582" cy="1042" r="12" fill="#ec5b2e"/><path d="M582 1030A12 12 0 0 1 594 1042H582Z" fill="#f18e5e"/><rect x="570" y="1036" width="13" height="13" rx="2" fill="#c4391a"/><text x="573" y="1047" font-size="11" font-weight="700" fill="#fff">P</text>
<circle cx="632" cy="1042" r="6" fill="none" stroke="#3e3e3e" stroke-width="4"/><circle cx="632" cy="1042" r="9" fill="none" stroke="#3e3e3e" stroke-width="2.500" stroke-dasharray="3.500 3.500"/>
<rect x="670" y="1030" width="24" height="24" fill="#39a6dc"/><text x="672" y="1047" font-size="13" font-weight="700" fill="#fff">MX</text>
<path d="M724 1029 728 1034H737L741 1029 744 1052H722Z" fill="#3e3a66"/><path d="M722 1052Q716 1050 720 1044" fill="none" stroke="#3e3a66" stroke-width="2"/><circle cx="729" cy="1040" r="1" fill="#aac"/><circle cx="737" cy="1040" r="1" fill="#aac"/>
<g fill="#1f6fb8"><rect x="413" y="1059" width="40" height="2.500"/><rect x="463" y="1059" width="40" height="2.500"/><rect x="513" y="1059" width="40" height="2.500"/><rect x="563" y="1059" width="40" height="2.500"/><rect x="612" y="1059" width="40" height="2.500"/><rect x="662" y="1059" width="40" height="2.500"/><rect x="715" y="1059" width="36" height="2.500"/></g>

<!-- watermark -->
<text x="1056" y="1026" font-size="41" fill="#8e9499" opacity=".6" textLength="350" lengthAdjust="spacingAndGlyphs" style="font-family:'Noto Sans CJK SC',sans-serif">知乎 @好家伙VCC</text>
<text x="1054" y="1024" font-size="41" fill="#fff" textLength="350" lengthAdjust="spacingAndGlyphs" style="font-family:'Noto Sans CJK SC',sans-serif">知乎 @好家伙VCC</text>
</svg>
</body></html>
